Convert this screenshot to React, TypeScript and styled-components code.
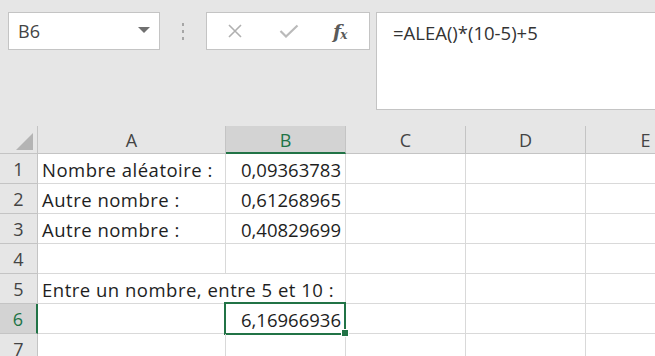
import React from "react";
import styled, { createGlobalStyle, css } from "styled-components";

const GREEN = "#217346";
const GRID = "#d9d9d9";
const HEAD_LINE = "#c4c4c4";

const GlobalStyle = createGlobalStyle`
  html, body { margin: 0; padding: 0; }
  body {
    background: #e6e6e6;
    font-family: "Open Sans", Lato, "Liberation Sans", sans-serif;
  }
`;

const Page = styled.div`
  width: 655px;
  height: 356px;
  overflow: hidden;
  background: #e6e6e6;
`;

const FormulaBar = styled.div`
  display: flex;
  align-items: flex-start;
  height: 126px;
  box-sizing: border-box;
  padding: 12px 0 0 8px;
`;

const NameBox = styled.div`
  width: 152px;
  height: 38px;
  box-sizing: border-box;
  background: #fff;
  border: 1px solid ${HEAD_LINE};
  display: flex;
  align-items: center;
  justify-content: space-between;
  padding: 0 9px 0 9px;
  font-size: 18px;
  color: #444;
`;

const DropArrow = styled.span`
  width: 0;
  height: 0;
  border-left: 6px solid transparent;
  border-right: 6px solid transparent;
  border-top: 6px solid #707070;
  margin-top: -2px;
`;

const Dots = styled.div`
  width: 46px;
  height: 38px;
  display: flex;
  flex-direction: column;
  align-items: center;
  justify-content: center;
  gap: 4px;
`;

const Dot = styled.span`
  width: 2px;
  height: 3px;
  background: #a6a6a6;
`;

const ButtonsBox = styled.div`
  width: 164px;
  height: 38px;
  box-sizing: border-box;
  background: #fff;
  border: 1px solid ${HEAD_LINE};
  display: flex;
  align-items: center;
  padding-left: 20px;
`;

const IconSlot = styled.span<{ $w: number }>`
  width: ${(p) => p.$w}px;
  display: flex;
  align-items: center;
`;

const Fx = styled.span`
  font-family: "DejaVu Serif", "Liberation Serif", serif;
  font-style: italic;
  font-weight: bold;
  color: #5a5a5a;
  font-size: 19px;
  letter-spacing: -1px;
  & > sub {
    font-size: 12px;
    vertical-align: -1px;
  }
`;

const FormulaBox = styled.div`
  flex: 1;
  margin-left: 6px;
  height: 98px;
  box-sizing: border-box;
  background: #fff;
  border: 1px solid ${HEAD_LINE};
  border-right: none;
  padding: 7px 0 0 16px;
  font-size: 18.5px;
  color: #333;
`;

const Sheet = styled.div`
  display: grid;
  grid-template-columns: 38px 188px 120px 120px 120px 120px;
  grid-template-rows: 28px repeat(7, 30px);
  width: 706px;
  background: #fff;
`;

const Corner = styled.div`
  background: #e6e6e6;
  border-right: 1px solid ${HEAD_LINE};
  border-bottom: 1px solid ${HEAD_LINE};
  display: flex;
  align-items: flex-end;
  justify-content: flex-end;
  padding: 0 4px 3px 0;
`;

const ColHead = styled.div<{ $active?: boolean }>`
  background: ${(p) => (p.$active ? "#d3d3d3" : "#e6e6e6")};
  border-right: 1px solid ${HEAD_LINE};
  border-bottom: ${(p) => (p.$active ? `2px solid ${GREEN}` : `1px solid ${HEAD_LINE}`)};
  color: ${(p) => (p.$active ? GREEN : "#444")};
  display: flex;
  align-items: center;
  justify-content: center;
  font-size: 18px;
  padding-top: ${(p) => (p.$active ? "1px" : "0")};
`;

const RowHead = styled.div<{ $active?: boolean }>`
  background: ${(p) => (p.$active ? "#d3d3d3" : "#e6e6e6")};
  border-right: ${(p) => (p.$active ? `2px solid ${GREEN}` : `1px solid ${HEAD_LINE}`)};
  border-bottom: 1px solid ${HEAD_LINE};
  color: ${(p) => (p.$active ? GREEN : "#444")};
  display: flex;
  align-items: center;
  justify-content: center;
  font-size: 18px;
  padding-top: 1px;
`;

const Cell = styled.div<{ $align?: "left" | "right"; $span?: number; $selected?: boolean }>`
  border-right: 1px solid ${GRID};
  border-bottom: 1px solid ${GRID};
  display: flex;
  align-items: center;
  justify-content: ${(p) => (p.$align === "right" ? "flex-end" : "flex-start")};
  padding: 1px 4px 0 4px;
  font-size: 18.5px;
  letter-spacing: ${(p) => (p.$align === "right" ? "0" : "0.5px")};
  color: #1e1e1e;
  white-space: nowrap;
  grid-column: span ${(p) => p.$span ?? 1};
  position: relative;
  ${(p) =>
    p.$selected &&
    css`
      &::after {
        content: "";
        position: absolute;
        left: -2px;
        top: -2px;
        right: -1px;
        bottom: -2px;
        border: 2px solid ${GREEN};
        pointer-events: none;
      }
      &::before {
        content: "";
        position: absolute;
        right: -4px;
        bottom: -4px;
        width: 6px;
        height: 6px;
        background: ${GREEN};
        border: 1px solid #fff;
        z-index: 2;
      }
    `}
`;

type CellDef = { text?: string; align?: "left" | "right"; span?: number; selected?: boolean };

const rows: CellDef[][] = [
  [{ text: "Nombre aléatoire :" }, { text: "0,09363783", align: "right" }, {}, {}, {}],
  [{ text: "Autre nombre :" }, { text: "0,61268965", align: "right" }, {}, {}, {}],
  [{ text: "Autre nombre :" }, { text: "0,40829699", align: "right" }, {}, {}, {}],
  [{}, {}, {}, {}, {}],
  [{ text: "Entre un nombre, entre 5 et 10 :", span: 2 }, {}, {}, {}],
  [{}, { text: "6,16966936", align: "right", selected: true }, {}, {}, {}],
  [{}, {}, {}, {}, {}],
];

const cols = ["A", "B", "C", "D", "E"];

export default function App() {
  return (
    <Page>
      <GlobalStyle />
      <FormulaBar>
        <NameBox>
          <span>B6</span>
          <DropArrow />
        </NameBox>
        <Dots>
          <Dot />
          <Dot />
          <Dot />
        </Dots>
        <ButtonsBox>
          <IconSlot $w={52}>
            <svg width="16" height="16" viewBox="0 0 16 16">
              <path d="M2 2 L14 14 M14 2 L2 14" stroke="#b0b0b0" strokeWidth="1.6" fill="none" />
            </svg>
          </IconSlot>
          <IconSlot $w={54}>
            <svg width="20" height="14" viewBox="0 0 20 14">
              <path d="M1.5 7 L7 12.5 L18.5 1.5" stroke="#bababa" strokeWidth="2.2" fill="none" />
            </svg>
          </IconSlot>
          <IconSlot $w={30}>
            <Fx>
              f<sub>x</sub>
            </Fx>
          </IconSlot>
        </ButtonsBox>
        <FormulaBox>=ALEA()*(10-5)+5</FormulaBox>
      </FormulaBar>
      <Sheet>
        <Corner>
          <svg width="17" height="17" viewBox="0 0 17 17">
            <path d="M17 0 L17 17 L0 17 Z" fill="#b4b4b4" />
          </svg>
        </Corner>
        {cols.map((c) => (
          <ColHead key={c} $active={c === "B"}>
            {c}
          </ColHead>
        ))}
        {rows.map((r, i) => (
          <React.Fragment key={i}>
            <RowHead $active={i === 5}>{i + 1}</RowHead>
            {r.map((cell, j) => (
              <Cell key={j} $align={cell.align} $span={cell.span} $selected={cell.selected}>
                {cell.text}
              </Cell>
            ))}
          </React.Fragment>
        ))}
      </Sheet>
    </Page>
  );
}
